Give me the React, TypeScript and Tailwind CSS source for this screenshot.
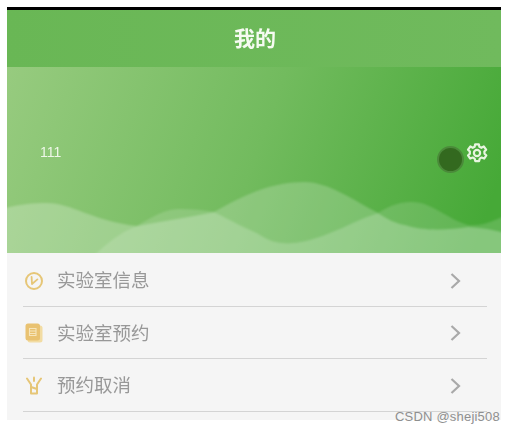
import React from "react";

const rows = [
  { label: "实验室信息", icon: "clock" },
  { label: "实验室预约", icon: "book" },
  { label: "预约取消", icon: "cancel" },
];

function RowIcon({ kind }: { kind: string }) {
  if (kind === "clock") {
    return (
      <svg width="20" height="20" viewBox="0 0 20 20" fill="none" stroke="#e6c677" strokeWidth="2" strokeLinecap="round" strokeLinejoin="round">
        <circle cx="10" cy="10" r="8" />
        <path d="M7.600 6 L8 13 L13.400 8.400" strokeWidth="1.800" />
      </svg>
    );
  }
  if (kind === "book") {
    return (
      <svg width="20" height="20" viewBox="0 0 20 20" fill="none">
        <rect x="3.500" y="2.500" width="15" height="17" rx="2.500" fill="#f2dca3" />
        <rect x="1.500" y="0.500" width="14.500" height="17" rx="2.500" fill="#e9c271" />
        <path d="M5.500 5.500 H12 V12.500 H5.500 Z M5.500 8 H12 M5.500 10.500 H12" stroke="#f6e5bb" strokeWidth="1.100" />
      </svg>
    );
  }
  return (
    <svg width="20" height="20" viewBox="0 0 20 20" fill="none" stroke="#e6c677" strokeWidth="2" strokeLinecap="round" strokeLinejoin="round">
      <path d="M3 2.500 L7 8.500 V17.500 H13 V8.500 L17 2.500" />
      <path d="M10 1.500 V5" />
      <path d="M7 11 L13 13" />
    </svg>
  );
}

export default function App() {
  return (
    <div className="relative w-[514px] h-[434px] bg-white overflow-hidden font-['Liberation_Sans','Noto_Sans_CJK_SC',sans-serif]">
      <div className="ml-[7px] pt-[7px] w-[494px]">
        <div className="h-[3px] bg-black" />
        <div className="h-[57px] flex items-center justify-center pl-[2px] bg-gradient-to-r from-[#69b755] to-[#70ba5d]">
          <span className="text-[21px] font-bold text-[#f6fbf1] blur-[0.5px]">我的</span>
        </div>
        <div className="relative h-[186px] overflow-hidden flex items-start pl-[33px] pr-[13px] pt-[76px] bg-[linear-gradient(110deg,#97cb7f_0%,#72bb5e_50%,#46a937_95%)]">
          <svg className="absolute left-[-6px] bottom-[-6px] blur-[0.8px]" width="506" height="80" viewBox="-6 0 506 80">
            <path d="M-6 30 C15 25 25 24 40 24 C65 24 85 42 130 47 C115 52 100 64 83 80 H-6 Z" fill="#ffffff" fillOpacity="0.24" />
            <path d="M130 47 C150 35 160 30 173 30 C185 30 197 31 207 33 C185 38 155 42 130 47 Z" fill="#ffffff" fillOpacity="0.15" />
            <path d="M207 33 C230 20 260 3 298 3 C320 3 345 20 371 34 C345 42 315 62 285 64 C270 65 262 62 250 54 C240 50 225 42 207 33 Z" fill="#ffffff" fillOpacity="0.2" />
            <path d="M371 34 C385 25 395 23 405 23 C425 23 440 40 461 46 C475 48 490 40 500 36 V55 C485 50 475 49 461 48 C440 51 415 52 398 46 C390 45 380 40 371 34 Z" fill="#ffffff" fillOpacity="0.14" />
            <path d="M83 80 C100 64 115 52 130 47 C155 42 185 38 207 33 C225 42 240 50 250 54 C262 62 270 65 285 64 C315 62 345 42 371 34 C380 40 390 45 398 46 C415 52 440 51 461 48 C475 49 485 50 500 55 V80 Z" fill="#ffffff" fillOpacity="0.35" />
          </svg>
          <span className="relative text-[14px] leading-[18px] text-[#eef7e8] blur-[0.4px]">111</span>
          <div className="relative ml-auto mt-[3px] w-[27px] h-[27px] rounded-full bg-[#33691f] border-[2px] border-[#4b8a3a] blur-[0.7px]" />
          <svg className="relative ml-[2px] -mt-[1px] blur-[0.4px]" width="22" height="22" viewBox="0 0 24 24" fill="none" stroke="#e8f5e0" strokeWidth="2.400" strokeLinejoin="round">
            <path d="M10 2.500 h4 l.6 2.800 2.200 1 2.600-1.400 2.600 3.400-2 2 .2 2.400 2 2-2.400 3.400-2.800-1.200-2 1.200-.8 2.800 h-4 l-.8-2.800-2-1.200-2.800 1.200 L2.200 14.700 l2-2 0-2.400-2-2 L4.800 4.900 7.400 6.300 9.400 5.300 Z" />
            <circle cx="12" cy="12" r="3.400" />
          </svg>
        </div>
        <div className="h-[167px] pt-[1px] bg-[#f5f5f5]">
          {rows.map((r) => (
            <div key={r.label} className="ml-[16px] mr-[14px] h-[52.600px] pt-[2px] flex items-center border-b border-[#d4d4d4]">
              <div className="w-[20px] h-[20px] ml-[1px] blur-[0.6px]"><RowIcon kind={r.icon} /></div>
              <span className="ml-[13px] text-[18.500px] text-[#989898] blur-[0.6px]">{r.label}</span>
              <svg className="ml-auto mr-[26px] blur-[0.4px]" width="12" height="18" viewBox="0 0 12 18" fill="none" stroke="#a9a9a9" strokeWidth="2.200">
                <path d="M2.500 2 L10 9 L2.500 16" />
              </svg>
            </div>
          ))}
        </div>
      </div>
      <span className="absolute left-[395px] top-[409px] text-[13px] leading-[16px] tracking-[0.2px] text-[#8f8f8f]">CSDN @sheji508</span>
    </div>
  );
}
